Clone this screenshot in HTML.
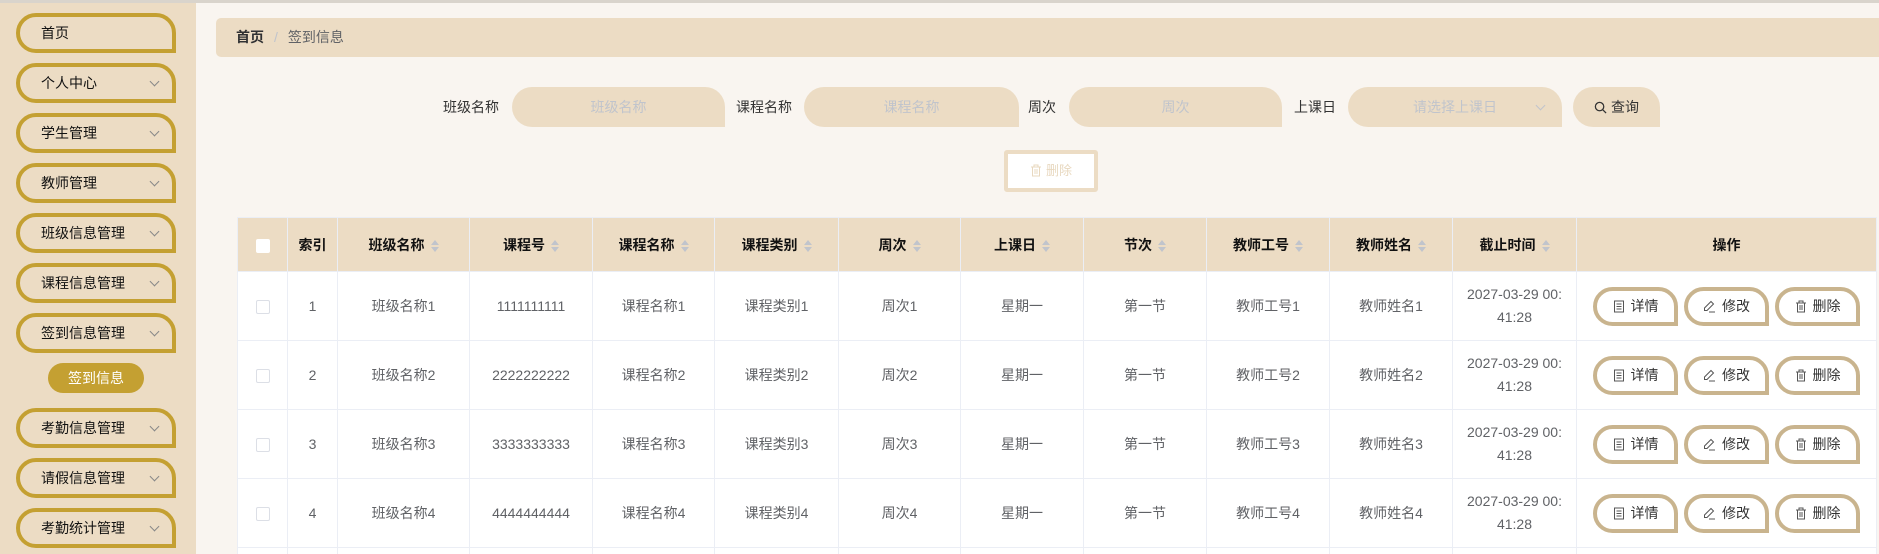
<!DOCTYPE html>
<html><head><meta charset="utf-8"><style>
*{box-sizing:border-box;margin:0;padding:0}
html{width:1879px;height:554px;overflow:hidden}
body{width:1879px;height:554px;overflow:hidden;font-family:"Liberation Sans","Noto Sans CJK SC",sans-serif;font-size:14px;background:#f9f5f0;position:relative;color:#303133}
.wrap{position:absolute;left:0;top:0;width:1879px;height:554px;overflow:hidden}
.top{position:absolute;left:0;top:0;width:1879px;height:3px;background:#d9d4cc}
.side{position:absolute;left:0;top:3px;width:196px;height:551px;background:#ecdcc4}
.nb{position:absolute;left:16px;width:160px;height:40px;border:4px solid #c4a032;border-radius:20px 20px 0 20px;font-size:14px;color:#111;line-height:32px;padding-left:21px}
.nb .ch{position:absolute;right:14px;top:11px;width:7px;height:7px;border-right:1px solid #888;border-bottom:1px solid #888;transform:rotate(45deg)}
.sub{position:absolute;left:48px;width:96px;height:30px;border-radius:15px;background:#c4a032;color:#fff;text-align:center;line-height:30px;font-size:14px}
.bc{position:absolute;left:216px;top:18px;width:1663px;height:39px;background:#ecdcc4;border-radius:5px 0 0 5px;line-height:39px;padding-left:20px;font-size:14px}
.bc b{color:#303133;font-weight:bold}
.bc span{color:#c0c4cc;margin:0 10px}
.bc i{font-style:normal;color:#606266}
.lbl{position:absolute;top:87px;height:40px;line-height:40px;color:#333;font-size:14px}
.inp{position:absolute;top:87px;height:40px;background:#ecdcc4;border-radius:20px 20px 0 20px;color:#c0c4cc;text-align:center;line-height:40px;font-size:14px}
.srch{position:absolute;left:1573px;top:87px;width:87px;height:40px;background:#ecdcc4;border-radius:20px 20px 0 20px;text-align:center;line-height:40px;color:#333}
.del{position:absolute;left:1004px;top:150px;width:94px;height:42px;border:4px solid #ecdcc4;border-radius:3px;background:#fff;color:#e8d8bf;text-align:center;line-height:34px;font-size:13px}
table{position:absolute;left:237px;top:217px;border-collapse:collapse;table-layout:fixed;background:#fff}
th{background:#ecdcc4;height:54px;font-weight:bold;color:#111;font-size:14px;border:1px solid #ebeef5}
td{height:69px;text-align:center;color:#606266;font-size:14px;border:1px solid #ebeef5;line-height:23px}
tr.last td{height:7px;line-height:0;border-bottom:0}
.s{display:inline-block;width:8px;height:12px;vertical-align:middle;margin-left:6px;position:relative}
.s:before{content:"";position:absolute;left:0;top:0;border:4px solid transparent;border-bottom:5px solid #c0c4cc;border-top:0}
.s:after{content:"";position:absolute;left:0;top:7px;border:4px solid transparent;border-top:5px solid #c0c4cc;border-bottom:0}
.cb{display:inline-block;width:14px;height:14px;border:1px solid #dcdfe6;border-radius:2px;background:#fff;vertical-align:middle}
.ab{display:inline-block;width:85px;height:39px;border:4px solid #c9b48e;border-radius:20px 20px 0 20px;line-height:31px;color:#333;font-size:14px;margin:0 3px;background:#fff}
.ab svg{vertical-align:-2px;margin-right:6px}
</style></head><body><div class="wrap">
<div class="top"></div>
<div class="side">
<div class="nb" style="top:10px">首页</div>
<div class="nb" style="top:60px">个人中心<span class="ch"></span></div>
<div class="nb" style="top:110px">学生管理<span class="ch"></span></div>
<div class="nb" style="top:160px">教师管理<span class="ch"></span></div>
<div class="nb" style="top:210px">班级信息管理<span class="ch"></span></div>
<div class="nb" style="top:260px">课程信息管理<span class="ch"></span></div>
<div class="nb" style="top:310px">签到信息管理<span class="ch"></span></div>
<div class="sub" style="top:360px">签到信息</div>
<div class="nb" style="top:405px">考勤信息管理<span class="ch"></span></div>
<div class="nb" style="top:455px">请假信息管理<span class="ch"></span></div>
<div class="nb" style="top:505px">考勤统计管理<span class="ch"></span></div>
</div>
<div class="bc"><b>首页</b><span>/</span><i>签到信息</i></div>
<div class="lbl" style="left:443px">班级名称</div><div class="inp" style="left:512px;width:213px">班级名称</div>
<div class="lbl" style="left:736px">课程名称</div><div class="inp" style="left:804px;width:215px">课程名称</div>
<div class="lbl" style="left:1028px">周次</div><div class="inp" style="left:1069px;width:213px">周次</div>
<div class="lbl" style="left:1294px">上课日</div><div class="inp" style="left:1348px;width:214px">请选择上课日<span style="position:absolute;right:18px;top:15px;width:7px;height:7px;border-right:1px solid #c0c4cc;border-bottom:1px solid #c0c4cc;transform:rotate(45deg)"></span></div>
<div class="srch"><svg width="13" height="13" viewBox="0 0 14 14" style="vertical-align:-2px;margin-right:4px"><circle cx="6" cy="6" r="4.5" fill="none" stroke="#333" stroke-width="1.4"/><path d="M9.5 9.5L13 13" stroke="#333" stroke-width="1.4"/></svg>查询</div>
<div class="del"><svg width="12" height="13" viewBox="0 0 12 13" style="vertical-align:-2px;margin-right:4px"><path d="M1 3h10M4 3V1h4v2M2.5 3v9h7V3M5 5v5M7 5v5" fill="none" stroke="#e8d8bf"/></svg>删除</div>
<table>
<colgroup><col style="width:50px"><col style="width:50px"><col style="width:132px"><col style="width:123px"><col style="width:122px"><col style="width:124px"><col style="width:122px"><col style="width:123px"><col style="width:123px"><col style="width:123px"><col style="width:123px"><col style="width:124px"><col style="width:300px"></colgroup>
<tr><th><span class="cb" style="border-color:#fff"></span></th><th>索引</th><th>班级名称<span class="s"></span></th><th>课程号<span class="s"></span></th><th>课程名称<span class="s"></span></th><th>课程类别<span class="s"></span></th><th>周次<span class="s"></span></th><th>上课日<span class="s"></span></th><th>节次<span class="s"></span></th><th>教师工号<span class="s"></span></th><th>教师姓名<span class="s"></span></th><th>截止时间<span class="s"></span></th><th>操作</th></tr>
<tr><td><span class="cb"></span></td><td>1</td><td>班级名称1</td><td>1111111111</td><td>课程名称1</td><td>课程类别1</td><td>周次1</td><td>星期一</td><td>第一节</td><td>教师工号1</td><td>教师姓名1</td><td>2027-03-29 00:<br>41:28</td><td class="ops"></td></tr>
<tr><td><span class="cb"></span></td><td>2</td><td>班级名称2</td><td>2222222222</td><td>课程名称2</td><td>课程类别2</td><td>周次2</td><td>星期一</td><td>第一节</td><td>教师工号2</td><td>教师姓名2</td><td>2027-03-29 00:<br>41:28</td><td class="ops"></td></tr>
<tr><td><span class="cb"></span></td><td>3</td><td>班级名称3</td><td>3333333333</td><td>课程名称3</td><td>课程类别3</td><td>周次3</td><td>星期一</td><td>第一节</td><td>教师工号3</td><td>教师姓名3</td><td>2027-03-29 00:<br>41:28</td><td class="ops"></td></tr>
<tr><td><span class="cb"></span></td><td>4</td><td>班级名称4</td><td>4444444444</td><td>课程名称4</td><td>课程类别4</td><td>周次4</td><td>星期一</td><td>第一节</td><td>教师工号4</td><td>教师姓名4</td><td>2027-03-29 00:<br>41:28</td><td class="ops"></td></tr>
<tr class="last"><td></td><td></td><td></td><td></td><td></td><td></td><td></td><td></td><td></td><td></td><td></td><td></td><td></td></tr>
</table>
</div>
<script>
var h='<span class="ab"><svg width="12" height="13" viewBox="0 0 12 13"><path d="M1.5 1h9v11h-9zM3.5 4h5M3.5 6.5h5M3.5 9h5" fill="none" stroke="#555"/></svg>详情</span><span class="ab"><svg width="13" height="13" viewBox="0 0 13 13"><path d="M8 1.5l2.5 2.5L4 10.5H1.5V8zM6 12h6" fill="none" stroke="#555"/></svg>修改</span><span class="ab"><svg width="12" height="13" viewBox="0 0 12 13"><path d="M1 3h10M4 3V1h4v2M2.5 3v9h7V3M5 5v5M7 5v5" fill="none" stroke="#555"/></svg>删除</span>';
document.querySelectorAll('.ops').forEach(function(e){e.innerHTML=h});
</script>
</body></html>
